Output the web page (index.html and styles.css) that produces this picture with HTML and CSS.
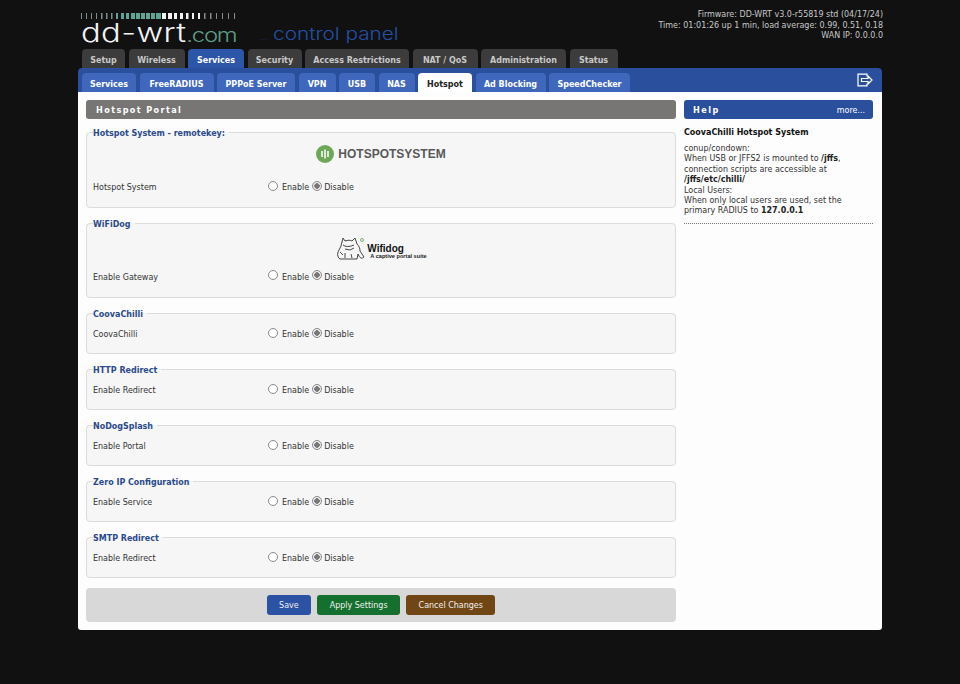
FILE: index.html
```html
<!DOCTYPE html>
<html lang="en">
<head>
<meta charset="utf-8">
<title>DD-WRT Hotspot</title>
<link rel="stylesheet" href="styles.css">
</head>
<body>
<div class="page">
  <header class="header">
    <div class="brand">
      <svg class="meter" width="158" height="6" viewBox="0 0 158 6">
        <g fill="#7d8f8d">
          <rect x="0" width="1" height="6"/><rect x="5" width="1" height="6"/><rect x="10" width="1" height="6"/><rect x="15" width="1" height="6"/><rect x="20" width="1.5" height="6"/><rect x="25" width="1.5" height="6"/><rect x="30" width="1.5" height="6"/>
        </g>
        <g fill="#5fa595">
          <rect x="35" width="2" height="6"/><rect x="40" width="3" height="6"/><rect x="45" width="3" height="6"/><rect x="50" width="4" height="6"/><rect x="55" width="4" height="6"/><rect x="60" width="4" height="6"/><rect x="65" width="4" height="6"/><rect x="70" width="4" height="6"/><rect x="75" width="5" height="6"/>
        </g>
        <g fill="#f2f2f2">
          <rect x="81" width="4" height="6"/><rect x="87" width="4" height="6"/><rect x="93" width="3" height="6"/><rect x="99" width="3" height="6"/><rect x="105" width="2.5" height="6"/><rect x="111" width="2" height="6"/><rect x="117" width="2" height="6"/>
        </g>
        <g fill="#8b8b8b">
          <rect x="123" width="1.5" height="6"/><rect x="129" width="1.5" height="6"/><rect x="135" width="1" height="6"/><rect x="141" width="1" height="6"/><rect x="147" width="1" height="6"/><rect x="153" width="1" height="6"/>
        </g>
      </svg>
      <div class="wordmark">
        <span class="logo-main">dd-wrt<span class="logo-com">.com</span></span>
        <span class="logo-panel"><span class="logo-dots">...</span> control panel</span>
      </div>
    </div>
    <div class="status-info">
      <div>Firmware: DD-WRT v3.0-r55819 std (04/17/24)</div>
      <div>Time: 01:01:26 up 1 min, load average: 0.99, 0.51, 0.18</div>
      <div>WAN IP: 0.0.0.0</div>
    </div>
  </header>

  <nav class="main-tabs">
    <a class="main-tab">Setup</a>
    <a class="main-tab">Wireless</a>
    <a class="main-tab active">Services</a>
    <a class="main-tab">Security</a>
    <a class="main-tab">Access Restrictions</a>
    <a class="main-tab">NAT / QoS</a>
    <a class="main-tab">Administration</a>
    <a class="main-tab">Status</a>
  </nav>

  <nav class="sub-bar">
    <div class="sub-tabs">
      <a class="sub-tab">Services</a>
      <a class="sub-tab">FreeRADIUS</a>
      <a class="sub-tab">PPPoE Server</a>
      <a class="sub-tab">VPN</a>
      <a class="sub-tab">USB</a>
      <a class="sub-tab">NAS</a>
      <a class="sub-tab active">Hotspot</a>
      <a class="sub-tab">Ad Blocking</a>
      <a class="sub-tab">SpeedChecker</a>
    </div>
    <svg class="logout" width="16" height="14" viewBox="0 0 16 14" fill="none" stroke="#fff" stroke-width="1.2">
      <path d="M10 3.500V1.200H1v11.600h9v-2.300"/>
      <path d="M4.500 5.500h6.500V3l4 4-4 4V8.500H4.500z"/>
    </svg>
  </nav>

  <main class="content">
    <section class="main-col">
      <h2 class="title-bar">Hotspot Portal</h2>

      <fieldset class="group group-logo">
        <legend>Hotspot System - remotekey:</legend>
        <div class="logo-row hs-logo">
          <svg width="18" height="18" viewBox="0 0 18 18">
            <circle cx="9" cy="9" r="9" fill="#6fa759"/>
            <path d="M6 6v6M9 4.500v9M12 6v6" stroke="#fff" stroke-width="1.500" fill="none"/>
          </svg>
          <span class="hs-name">HOTSPOTSYSTEM</span>
        </div>
        <div class="row">
          <span class="row-label">Hotspot System</span>
          <span class="choice"><input type="radio" name="hs"><label>Enable</label><input type="radio" name="hs" checked><label>Disable</label></span>
        </div>
      </fieldset>

      <fieldset class="group group-logo">
        <legend>WiFiDog</legend>
        <div class="logo-row wd-logo">
          <svg width="29" height="24" viewBox="0 0 29 24" fill="none" stroke="#333" stroke-width="0.900">
            <path d="M6 2l2 3c3-1 5-1 7 0l3-3 2 6c2 2 3 4 3 7l4 6c-2 2-4 1-5-1l-1-2-1 5H3c-2-1-3-4-2-7l3-6z"/>
            <path d="M6 9c2 2 7 2 11 0M8 13l5 1 4-2M8 22v-5M15 22l-1-4M3 16l3 3"/>
            <circle cx="25" cy="4" r="1.500" stroke="#6fa759"/>
          </svg>
          <span class="wd-text"><b class="wd-name">Wifidog</b><b class="wd-sub">A captive portal suite</b></span>
        </div>
        <div class="row">
          <span class="row-label">Enable Gateway</span>
          <span class="choice"><input type="radio" name="wd"><label>Enable</label><input type="radio" name="wd" checked><label>Disable</label></span>
        </div>
      </fieldset>

      <fieldset class="group">
        <legend>CoovaChilli</legend>
        <div class="row">
          <span class="row-label">CoovaChilli</span>
          <span class="choice"><input type="radio" name="cc"><label>Enable</label><input type="radio" name="cc" checked><label>Disable</label></span>
        </div>
      </fieldset>

      <fieldset class="group">
        <legend>HTTP Redirect</legend>
        <div class="row">
          <span class="row-label">Enable Redirect</span>
          <span class="choice"><input type="radio" name="hr"><label>Enable</label><input type="radio" name="hr" checked><label>Disable</label></span>
        </div>
      </fieldset>

      <fieldset class="group">
        <legend>NoDogSplash</legend>
        <div class="row">
          <span class="row-label">Enable Portal</span>
          <span class="choice"><input type="radio" name="nd"><label>Enable</label><input type="radio" name="nd" checked><label>Disable</label></span>
        </div>
      </fieldset>

      <fieldset class="group">
        <legend>Zero IP Configuration</legend>
        <div class="row">
          <span class="row-label">Enable Service</span>
          <span class="choice"><input type="radio" name="zi"><label>Enable</label><input type="radio" name="zi" checked><label>Disable</label></span>
        </div>
      </fieldset>

      <fieldset class="group">
        <legend>SMTP Redirect</legend>
        <div class="row">
          <span class="row-label">Enable Redirect</span>
          <span class="choice"><input type="radio" name="sr"><label>Enable</label><input type="radio" name="sr" checked><label>Disable</label></span>
        </div>
      </fieldset>

      <div class="actions">
        <button class="btn btn-save">Save</button>
        <button class="btn btn-apply">Apply Settings</button>
        <button class="btn btn-cancel">Cancel Changes</button>
      </div>
    </section>

    <aside class="help">
      <div class="help-bar"><span class="help-title">Help</span><span class="help-more">more...</span></div>
      <h3 class="help-head">CoovaChilli Hotspot System</h3>
      <p class="help-text">conup/condown:<br>When USB or JFFS2 is mounted to <b>/jffs</b>,<br>connection scripts are accessible at<br><b>/jffs/etc/chilli/</b><br>Local Users:<br>When only local users are used, set the<br>primary RADIUS to <b>127.0.0.1</b></p>
    </aside>
  </main>
</div>
</body>
</html>
```

FILE: styles.css
```css
* { box-sizing: border-box; }
html, body { margin: 0; height: 100%; }
body {
  background: #111;
  font-family: "DejaVu Sans Condensed", "DejaVu Sans", sans-serif;
  font-size: 8.900px;
  color: #333;
}
.page { width: 805px; margin-left: 78px; }

.header { display: flex; justify-content: space-between; height: 49px; }
.brand { padding: 13px 0 0 3px; }
.meter { display: block; }
.wordmark { display: flex; align-items: flex-end; height: 30px; width: 320px; }
.logo-main {
  display: inline-block;
  flex: none;
  width: 178px;
  font-family: "Inter", sans-serif;
  font-weight: 300;
  font-size: 26px;
  line-height: 27px;
  letter-spacing: 0.300px;
  color: #f4f4f4;
  white-space: nowrap;
  transform: scaleX(1.26);
  transform-origin: left center;
}
.logo-com { color: #5e9c86; font-size: 19px; letter-spacing: -1px; }
.logo-panel {
  flex: none;
  font-family: "Inter", sans-serif;
  font-weight: 300;
  font-size: 17px;
  line-height: 23px;
  color: #2450a5;
  white-space: nowrap;
  transform: scaleX(1.22);
  transform-origin: left center;
}
.logo-dots { color: #1f3f7f; font-size: 8px; }
.status-info { padding-top: 9px; text-align: right; line-height: 10.500px; color: #c8c8c8; }

.main-tabs {
  display: grid;
  grid-template-columns: 43px 56px 56px 54px 104px 65px 85px 48px;
  gap: 3.500px;
  height: 19px;
  padding-left: 4px;
}
.main-tab {
  display: flex; align-items: center; justify-content: center;
  padding-top: 2px;
  background: #3c3c3c;
  color: #c8c8c8;
  font-weight: bold;
  border-radius: 4px 4px 0 0;
}
.main-tab.active { background: #2d55a8; color: #fff; }

.sub-bar {
  display: flex; justify-content: space-between; align-items: flex-end;
  width: 804px; height: 24px;
  padding: 0 9px 0 4px;
  background: #2a4f9d;
  border-radius: 4px 4px 0 0;
}
.sub-tabs {
  display: grid;
  grid-template-columns: 54px 74px 78px 37px 36px 36px 54px 70px 81px;
  gap: 3.500px;
  height: 19px;
}
.sub-tab {
  display: flex; align-items: center; justify-content: center;
  padding-top: 2px;
  background: #3f68bd;
  color: #fff;
  font-weight: bold;
  border-radius: 4px 4px 0 0;
}
.sub-tab.active { background: #fff; color: #222; }
.logout { align-self: flex-start; margin-top: 5px; }

.content {
  display: flex; gap: 8px;
  width: 804px; height: 538px;
  padding: 8px 9px 0 8px;
  background: #fdfdfd;
  border-radius: 0 0 3px 3px;
}
.main-col { width: 590px; }
.title-bar {
  margin: 0 0 8px;
  height: 19px; line-height: 20px;
  padding-left: 10px;
  background: #777674;
  color: #fff;
  font-size: 9px;
  font-weight: bold;
  letter-spacing: 1.400px;
  border-radius: 3px;
}

.group {
  margin: 0 0 10px;
  padding: 5px 6px 0 6px;
  min-width: 0;
  background: #f6f6f6;
  border: 1px solid #dcdcdc;
  border-radius: 4px;
  height: 46px;
}
.group legend {
  padding: 1px 4px 0 0;
  color: #2b4a8b;
  font-weight: bold;
  line-height: 11px;
  height: 11px;
}
.group-logo { height: 80.500px; }
.logo-row { display: flex; align-items: center; justify-content: center; height: 34px; padding-bottom: 12px; }
.hs-logo { gap: 4px; }
.hs-name {
  font-family: "Liberation Sans", sans-serif;
  font-weight: bold;
  font-size: 12px;
  color: #58595b;
}
.wd-logo { gap: 1px; height: 33px; padding: 0 0 5px 2px; }
.wd-text { display: flex; flex-direction: column; margin-top: 7px; }
.wd-name { font-family: "Liberation Sans", sans-serif; font-size: 10px; color: #111; line-height: 10px; }
.wd-sub { font-family: "Liberation Sans", sans-serif; font-size: 5.600px; color: #222; line-height: 5px; padding-left: 3px; white-space: nowrap; }

.row { display: flex; align-items: center; height: 20px; }
.row-label { width: 175px; }
.choice { display: flex; align-items: center; }
.choice input {
  appearance: none;
  flex: none;
  width: 10px; height: 10px;
  margin: 0 4px 3px 0;
  background: #fff;
  border: 1px solid #8a8a8a;
  border-radius: 50%;
}
.choice input:checked {
  margin-right: 2px;
  background: radial-gradient(circle, #777 0 2.500px, #eee 3px);
}
.choice label { margin-right: 3px; }

.actions {
  display: flex; justify-content: center; gap: 6px;
  height: 34px;
  padding-top: 7px;
  background: #d8d8d8;
  border-radius: 4px;
}
.btn {
  height: 20px;
  border: 0;
  border-radius: 3px;
  color: #f0f0f0;
  font: inherit;
  padding: 0 12.500px;
}
.btn-save { background: #2c52a3; }
.btn-apply { background: #15702f; }
.btn-cancel { background: #704714; }

.help { width: 189px; }
.help-bar {
  display: flex; justify-content: space-between; align-items: center;
  height: 19px;
  padding: 0 8px 0 9px;
  background: #2a4f9d;
  color: #fff;
  border-radius: 3px;
}
.help-title { font-weight: bold; font-size: 9px; letter-spacing: 1.500px; }
.help-head { margin: 8px 0 5px; font-size: 8.900px; font-weight: bold; color: #111; line-height: 11px; }
.help-text {
  margin: 0;
  padding-bottom: 7px;
  line-height: 10.400px;
  border-bottom: 1px dotted #777;
}
.help-text b { color: #222; }
```
